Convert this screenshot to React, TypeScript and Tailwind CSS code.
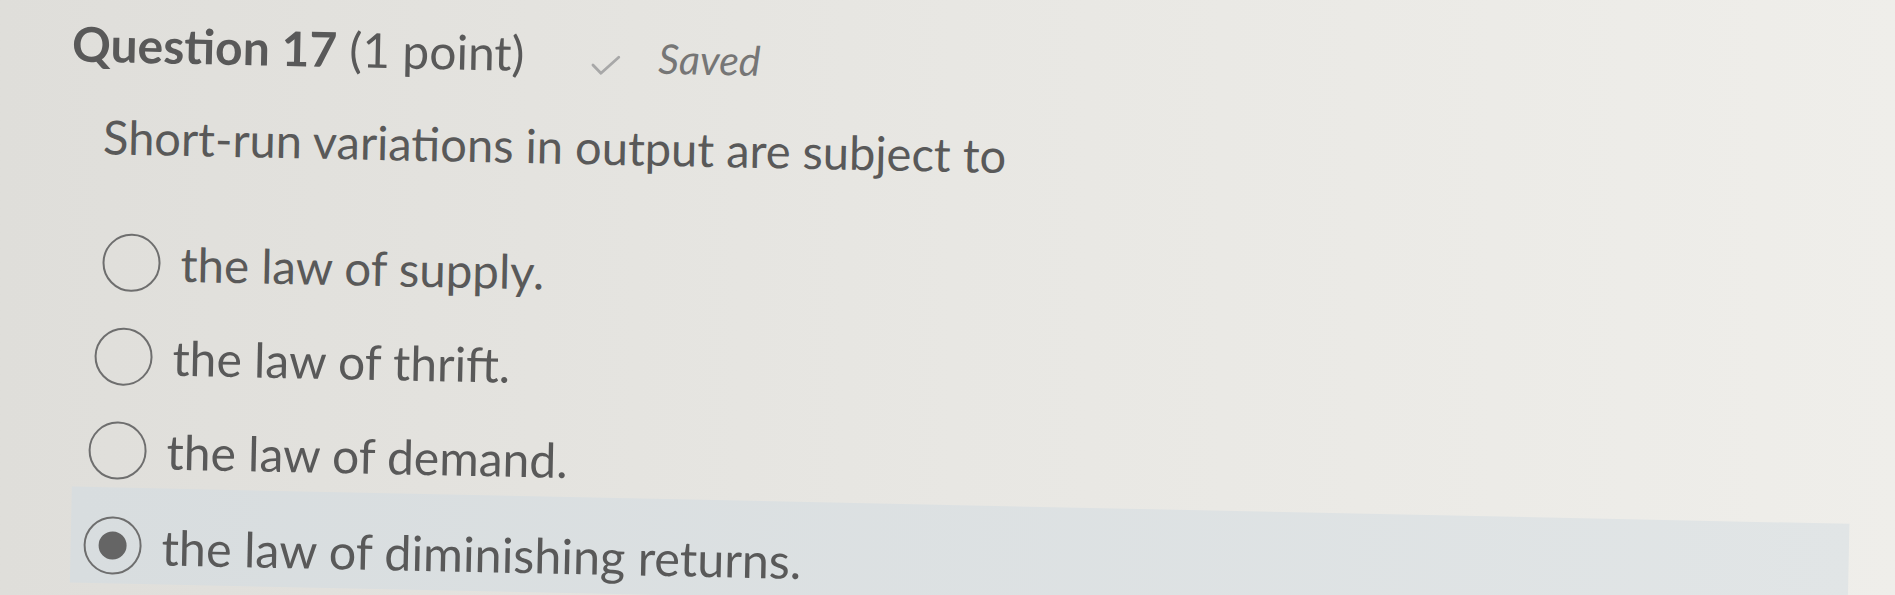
const options = [
  { label: "the law of supply.", indent: "ml-[35px]", size: "text-[47.5px]" },
  { label: "the law of thrift.", indent: "ml-[29px]", size: "text-[48px]" },
  { label: "the law of demand.", indent: "ml-[25px]", size: "text-[48px]" },
];

function Radio({ checked = false }: { checked?: boolean }) {
  return (
    <span className="w-[58px] h-[58px] shrink-0 rounded-full border-[2.5px] border-[#6e6e6e] flex items-center justify-center">
      {checked && <span className="w-[28px] h-[28px] rounded-full bg-[#656565]" />}
    </span>
  );
}

export default function App() {
  return (
    <div className="w-full h-[595px] overflow-hidden bg-gradient-to-r from-[#dfdeda] via-[#e8e7e3] to-[#efeeea] font-['Lato',sans-serif]">
      <div className="origin-top-left rotate-[1.2deg] pl-[73px] pt-[13px]">
        {/* header */}
        <div className="flex items-baseline">
          <h2 className="text-[48px] leading-[1.2] text-[#595959]">
            <span className="font-bold">Question 17</span> (1 point)
          </h2>
          <svg viewBox="0 0 26 18" className="ml-[62px] w-[38px] h-[21px] self-center translate-y-[11px]" fill="none">
            <polyline points="2,9 9,16 24,2" stroke="#a8a8a8" strokeWidth="2.4" strokeLinecap="round" strokeLinejoin="round" />
          </svg>
          <span className="ml-[34px] text-[41px] italic text-[#767676] leading-[1.2]">Saved</span>
        </div>

        {/* prompt */}
        <p className="ml-[33px] mt-[35px] text-[47px] leading-[1.2] text-[#595959]">
          Short-run variations in output are subject to
        </p>

        {/* answers */}
        <div className="mt-[51px]">
          {options.map((o) => (
            <label key={o.label} className={`${o.indent} h-[94px] flex items-center gap-5`}>
              <Radio />
              <span className={`${o.size} leading-[1.2] text-[#595959]`}>{o.label}</span>
            </label>
          ))}
          <label className="ml-[9px] mt-[-10px] w-[1778px] h-[96px] pt-[20px] pl-[13px] flex items-center gap-5 bg-gradient-to-r from-[#d8dddf] to-[#e1e5e6]">
            <Radio checked />
            <span className="text-[48.5px] leading-[1.2] text-[#595959]">the law of diminishing returns.</span>
          </label>
        </div>
      </div>
    </div>
  );
}
